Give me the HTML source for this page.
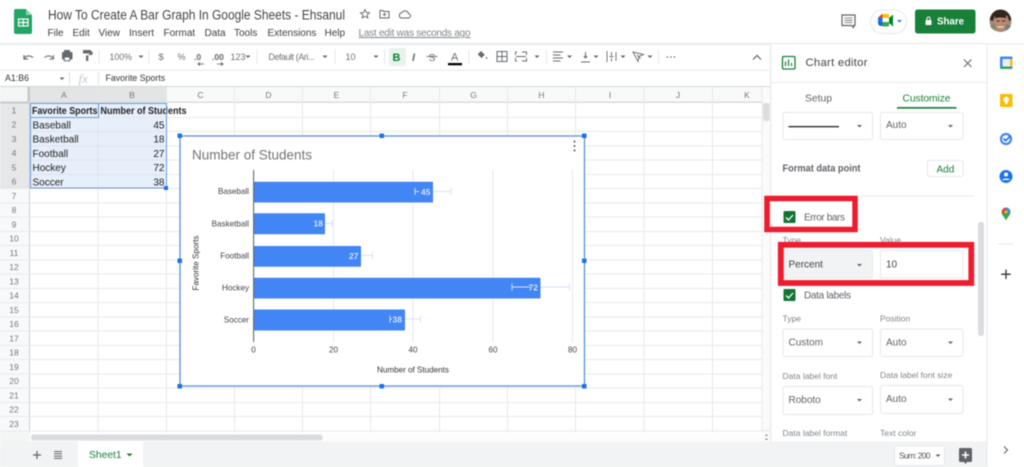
<!DOCTYPE html>
<html><head><meta charset="utf-8"><title>How To Create A Bar Graph In Google Sheets</title>
<style>
html,body{margin:0;padding:0;background:#fff;width:1024px;height:467px;overflow:hidden}
svg{display:block;filter:blur(.45px)}
text{font-family:"Liberation Sans",sans-serif;font-size:10px;fill:#3c4043}
.m{font-size:10px;fill:#3c4043}
.h{font-size:8.5px;fill:#777;text-anchor:middle}
.c{font-size:10px;fill:#222}
.b{font-weight:bold;fill:#222;font-size:10px}
.r{text-anchor:end}
.a{font-size:8.1px;fill:#444;text-anchor:end}
.x{font-size:8.1px;fill:#444;text-anchor:middle}
.l{font-size:8.5px;fill:#d5e2fb;font-weight:bold;text-anchor:end}
.e{font-size:10px;fill:#5f6368}
.s{font-size:8.5px;fill:#80868b}
.gl{stroke:#e8e9e9;stroke-width:1}
.box{fill:#fff;stroke:#e6e7e9;stroke-width:1}
.ar{fill:#5f6368}
.eb{stroke:#d5e2fa;stroke-width:1;fill:none}
.hd{fill:#1a73e8}
.ic{fill:none;stroke:#5f6368;stroke-width:1.2}
</style></head><body>
<svg width="1024" height="467" viewBox="0 0 1024 467" xmlns="http://www.w3.org/2000/svg">
<rect width="1024" height="467" fill="#fff"/>

<!-- logo -->
<path d="M16 9h10l6 6v17a2 2 0 0 1-2 2H16a2 2 0 0 1-2-2V11a2 2 0 0 1 2-2z" fill="#23a566"/>
<path d="M26 9l6 6h-6z" fill="#8ed1b1"/>
<rect x="18.500" y="19" width="9.500" height="7" fill="none" stroke="#fff" stroke-width="1.200"/>
<path d="M23.200 19v7M18.500 22.500H28" stroke="#fff" stroke-width="1.200"/>

<text x="48" y="19.500" style="font-size:13.400px;fill:#444746" textLength="297" lengthAdjust="spacingAndGlyphs">How To Create A Bar Graph In Google Sheets - Ehsanul</text>
<path d="M365 9.500l1.300 3 3.200.3-2.400 2.100.7 3.100-2.800-1.600-2.800 1.600.7-3.100-2.400-2.100 3.200-.3z" fill="none" stroke="#5f6368" stroke-width=".9"/>
<path d="M380 10.500h3l1 1h5v6.500h-9z" fill="none" stroke="#5f6368" stroke-width="1"/>
<path d="M384.500 12.500v4M382.500 14.500h4" stroke="#5f6368" stroke-width=".8"/>
<path d="M401 18h7a2.200 2.200 0 0 0 .5-4.400 3.500 3.500 0 0 0-6.500-.8 2.700 2.700 0 0 0-1 5.200z" fill="none" stroke="#5f6368" stroke-width="1"/>

<text class="m" x="47.500" y="36">File</text>
<text class="m" x="72.500" y="36">Edit</text>
<text class="m" x="98.500" y="36">View</text>
<text class="m" x="129" y="36">Insert</text>
<text class="m" x="163.500" y="36">Format</text>
<text class="m" x="204.500" y="36">Data</text>
<text class="m" x="234" y="36">Tools</text>
<text class="m" x="267.500" y="36">Extensions</text>
<text class="m" x="324.500" y="36">Help</text>
<text x="358.500" y="36" style="font-size:10px;fill:#80868b" textLength="112" text-decoration="underline">Last edit was seconds ago</text>

<!-- top right -->
<path d="M842 15h13v10.500h-1.500v2l-2-2H842z" fill="none" stroke="#5f6368" stroke-width="1.200"/>
<path d="M844.500 18h8M844.500 20.300h8M844.500 22.600h8" stroke="#5f6368" stroke-width=".8"/>
<rect x="870.500" y="10" width="36" height="23.500" rx="11.700" fill="#fff" stroke="#e6e7e9"/>
<path d="M878 17.500l4-3.500h7v4h-6.500v3.500H878z" fill="#ea4335"/>
<path d="M878 17.500h4.500v4.500H878z" fill="#1a73e8"/>
<path d="M878 22h4.500v4H881a3 3 0 0 1-3-3z" fill="#1967d2"/>
<path d="M882.500 22h6.500v4.500h-6.500z" fill="#34a853"/>
<path d="M882.500 14h6.500v4h-6.500z" fill="#fbbc04"/>
<path d="M889 18l4-3.500v12L889 23z" fill="#00832d"/>
<path d="M897 20h5l-2.500 2.500z" fill="#1a73e8"/>
<rect x="915" y="9.500" width="60.500" height="24" rx="2.500" fill="#188038"/>
<rect x="925.500" y="20" width="6" height="5" rx=".8" fill="#fff"/>
<path d="M926.800 20v-1.300a1.700 1.700 0 0 1 3.400 0V20" fill="none" stroke="#fff" stroke-width=".9"/>
<text x="937" y="24.500" style="font-size:10.500px;fill:#fff;font-weight:bold" textLength="27" lengthAdjust="spacingAndGlyphs">Share</text>
<circle cx="1000.500" cy="21" r="11" fill="#a88773"/>
<path d="M990 20a10.500 10.500 0 0 1 21 0l-2 1c-.5-3-1-5-3-5.500-3 1-8 .7-11 .5-1 1-1.500 3-2 5z" fill="#33261f"/>
<ellipse cx="1000.500" cy="23" rx="6" ry="7.500" fill="#b98a70"/>
<path d="M995 18.500c3-1.500 8-1.500 11 0l-.5-4h-10z" fill="#2e221c"/>
<path d="M996.500 21h3M1002 21h3" stroke="#33261f" stroke-width="1"/>
<path d="M997.500 27h6" stroke="#f0e5dc" stroke-width="1.200"/>
<path d="M990 26a11 11 0 0 0 6 5l-1-7z" fill="#7c8a6b"/>
<path d="M1011 26a11 11 0 0 1-6 5l1-7z" fill="#6f7d8a"/>

<!-- bars -->
<rect x="0" y="43" width="987" height="1" fill="#e6e7e8"/>
<rect x="0" y="44" width="771" height="1.500" fill="#f1f3f4"/>
<rect x="0" y="69.500" width="771" height="1.500" fill="#eeeff0"/>
<rect x="0" y="86" width="771" height="1" fill="#d5d6d7"/>
<rect x="987" y="43.500" width="37" height="1" fill="#e6e7e8"/>

<!-- toolbar -->
<path d="M24 59c1.500-3.500 6-4 9-1.500M24 55v4h4" class="ic" style="stroke:#6b6f73"/>
<path d="M53.500 59c-1.500-3.500-6-4-9-1.500M53.500 55v4h-4" class="ic" style="stroke:#7a7d80"/>
<rect x="62" y="52" width="10.500" height="7.500" rx="1" fill="#666a6e"/><rect x="64" y="50" width="6" height="2.500" fill="#666a6e"/><rect x="64.300" y="57" width="5.500" height="3.800" fill="#fff" stroke="#666a6e"/>
<path d="M83 50h8v3.500h-8zM91 51.500h1.500v3.500h-5v1.500" fill="#666a6e"/><rect x="86" y="55.500" width="2.300" height="5.500" fill="#666a6e"/>
<rect x="98.500" y="50" width="1" height="14" fill="#e6e7e9"/>
<text x="109.500" y="60" style="font-size:8.800px;fill:#707070">100%</text>
<path d="M138.500 55.500h5l-2.500 2.500z" class="ar"/>
<rect x="148.500" y="50" width="1" height="14" fill="#e6e7e9"/>
<text x="158.500" y="60" style="font-size:9.500px;fill:#707070">$</text>
<text x="177.500" y="60" style="font-size:9px;fill:#707070">%</text>
<text x="194" y="60" style="font-size:8.500px;fill:#666;font-weight:bold">.0</text>
<path d="M204 64h-6M200 62.500L198 64l2 1.500" stroke="#555" fill="none" stroke-width=".8"/>
<text x="212" y="60" style="font-size:8.500px;fill:#666;font-weight:bold">.00</text>
<path d="M217 64h6M221 62.500l2 1.500-2 1.500" stroke="#555" fill="none" stroke-width=".8"/>
<text x="230.500" y="60" style="font-size:9px;fill:#707070">123</text>
<path d="M245.500 55.500h5l-2.500 2.500z" class="ar"/>
<rect x="256.500" y="50" width="1" height="14" fill="#e6e7e9"/>
<text x="268.500" y="60" style="font-size:8.800px;fill:#707070" textLength="46">Default (Ari...</text>
<path d="M322.500 55.500h5l-2.500 2.500z" class="ar"/>
<rect x="334.500" y="50" width="1" height="14" fill="#e6e7e9"/>
<text x="345.500" y="60" style="font-size:9px;fill:#707070">10</text>
<path d="M373.500 55.500h5l-2.500 2.500z" class="ar"/>
<rect x="384" y="50" width="1" height="14" fill="#e6e7e9"/>
<rect x="389" y="48" width="17" height="18" rx="2" fill="#e6f4ea"/>
<text x="392.500" y="61" style="font-size:11px;font-weight:bold;fill:#188038">B</text>
<text x="412" y="61" style="font-size:11px;font-style:italic;font-weight:bold;fill:#6b6f73">I</text>
<text x="428.500" y="61" style="font-size:10.500px;fill:#6b6f73">S</text><rect x="426.500" y="56" width="11" height=".9" fill="#6b6f73"/>
<text x="451" y="60.500" style="font-size:11px;fill:#6b6f73">A</text><rect x="448" y="63" width="14" height="2.300" fill="#000"/>
<rect x="468.500" y="50" width="1" height="14" fill="#e6e7e9"/>
<path d="M481 51l3.800 3.800-3.300 3.300-3.800-3.800z" fill="#666a6e"/><circle cx="486.500" cy="58" r=".9" fill="#666a6e"/>
<rect x="497" y="51.500" width="10" height="10" fill="none" stroke="#666a6e" stroke-width="1"/><path d="M502 51.500v10M497 56.500h10" stroke="#666a6e" stroke-width=".9"/>
<path d="M517 52h-1.500v3M517 61h-1.500v-3M522 52h4.500v3M522 61h4.500v-3M516 56.500h10" stroke="#666a6e" fill="none" stroke-width="1"/>
<path d="M534.500 55.500h5l-2.500 2.500z" class="ar"/>
<rect x="546" y="50" width="1" height="14" fill="#e6e7e9"/>
<path d="M553 52h10M553 55h7.500M553 58h10M553 61h7.500" stroke="#666a6e" stroke-width=".9"/>
<path d="M567 55.500h5l-2.500 2.500z" class="ar"/>
<path d="M581 62h9M585.500 52v5.500M583.800 56l1.700 2 1.700-2" stroke="#666a6e" fill="none" stroke-width="1"/>
<path d="M593.500 55.500h5l-2.500 2.500z" class="ar"/>
<path d="M607 51v11M616 52v9M611.500 52v3.500M611.500 58v3.500M609.500 56.500h4" stroke="#666a6e" fill="none" stroke-width=".9"/>
<path d="M620.500 55.500h5l-2.500 2.500z" class="ar"/>
<path d="M633 52l10.500 2.500-4.500 2-1 5zM637 55l3.500 3.500" stroke="#666a6e" fill="none" stroke-width=".9"/>
<path d="M647.500 55.500h5l-2.500 2.500z" class="ar"/>
<rect x="658" y="50" width="1" height="14" fill="#e6e7e9"/>
<circle cx="667.500" cy="57" r=".8" fill="#5f6368"/><circle cx="671" cy="57" r=".8" fill="#5f6368"/><circle cx="674.500" cy="57" r=".8" fill="#5f6368"/>
<path d="M753 59.500l4-4 4 4" fill="none" stroke="#5f6368" stroke-width="1.200"/>

<!-- formula -->
<text x="5" y="81" style="font-size:8.800px;fill:#333">A1:B6</text>
<path d="M59.500 77.500h5l-2.500 2.500z" class="ar"/>
<rect x="69" y="72" width="1" height="13" fill="#dfe0e1"/>
<text x="78.500" y="83" style="font-size:13px;font-style:italic;fill:#c5c7c9;font-family:'Liberation Serif',serif">fx</text>
<rect x="98" y="72" width="1" height="13" fill="#dfe0e1"/>
<text x="105.500" y="81" style="font-size:8.800px;fill:#333">Favorite Sports</text>

<!-- sheet -->
<rect x="0" y="87" width="762" height="15.500" fill="#f8f9fa"/>
<rect x="0" y="103" width="29.500" height="329" fill="#f8f9fa"/>
<rect x="30" y="87" width="136.500" height="15.500" fill="#e3e4e6"/>
<rect x="0" y="103" width="29.500" height="85.500" fill="#e6e7e8"/>
<rect x="0" y="87" width="29" height="15.500" fill="#f4f5f5"/>
<rect x="27.500" y="87" width="2.500" height="15.500" fill="#c6c7c9"/>
<rect x="0" y="101.500" width="29" height="2" fill="#c9cacc"/>
<rect x="30" y="101.500" width="732" height="1.500" fill="#dcdddd"/>
<rect x="29" y="103" width="1" height="329" fill="#cfd0d2"/>
<rect x="30" y="103" width="136.500" height="85.500" fill="#e7effb"/>
<g class="gl">
<path d="M98 87v345M166.500 87v345M234.500 87v345M302.500 87v345M370.500 87v345M439.500 87v345M507.500 87v345M575.500 87v345M644 87v345M712.500 87v345M762 87v345"/>
<path d="M0 117.500h762M0 131.500h762M0 146h762M0 160h762M0 174.500h762M0 188.500h762M0 203h762M0 217h762M0 231.500h762M0 245.500h762M0 260h762M0 274h762M0 288.500h762M0 302.500h762M0 317h762M0 331h762M0 345.500h762M0 359.500h762M0 374h762M0 388h762M0 402.500h762M0 416.500h762M0 431h762"/>
</g>
<path d="M30 131.500h136.500M30 146h136.500M30 160h136.500M30 174.500h136.500M98 117.500v71" stroke="#dbe4f0" fill="none"/>

<g class="h">
<text class="h" x="64" y="98">A</text><text class="h" x="132" y="98">B</text><text class="h" x="200.500" y="98">C</text><text class="h" x="268.500" y="98">D</text><text class="h" x="336.500" y="98">E</text><text class="h" x="405" y="98">F</text><text class="h" x="473.500" y="98">G</text><text class="h" x="541.500" y="98">H</text><text class="h" x="610" y="98">I</text><text class="h" x="678" y="98">J</text><text class="h" x="747" y="98">K</text>
<text class="h" x="14" y="113.500">1</text><text class="h" x="14" y="127.500">2</text><text class="h" x="14" y="142">3</text><text class="h" x="14" y="156">4</text><text class="h" x="14" y="170.500">5</text><text class="h" x="14" y="184.500">6</text><text class="h" x="14" y="199">7</text><text class="h" x="14" y="213">8</text><text class="h" x="14" y="227.500">9</text><text class="h" x="14" y="241.500">10</text><text class="h" x="14" y="256">11</text><text class="h" x="14" y="270">12</text><text class="h" x="14" y="284.500">13</text><text class="h" x="14" y="298.500">14</text><text class="h" x="14" y="313">15</text><text class="h" x="14" y="327">16</text><text class="h" x="14" y="341.500">17</text><text class="h" x="14" y="355.500">18</text><text class="h" x="14" y="370">19</text><text class="h" x="14" y="384">20</text><text class="h" x="14" y="398.500">21</text><text class="h" x="14" y="412.500">22</text><text class="h" x="14" y="427">23</text>
</g>

<text class="b" x="32" y="114" textLength="65.500" lengthAdjust="spacingAndGlyphs">Favorite Sports</text>
<text class="b" x="100.500" y="114" textLength="86" lengthAdjust="spacingAndGlyphs">Number of Students</text>
<text class="c" x="32.500" y="128.500">Baseball</text><text class="c r" x="164.500" y="128.500">45</text>
<text class="c" x="32.500" y="142.500">Basketball</text><text class="c r" x="164.500" y="142.500">18</text>
<text class="c" x="32.500" y="157">Football</text><text class="c r" x="164.500" y="157">27</text>
<text class="c" x="32.500" y="171">Hockey</text><text class="c r" x="164.500" y="171">72</text>
<text class="c" x="32.500" y="185.500">Soccer</text><text class="c r" x="164.500" y="185.500">38</text>
<rect x="30.500" y="103.500" width="136" height="84.500" fill="none" stroke="#6b9ad6" stroke-width="1"/>
<rect x="30.500" y="103.500" width="68" height="14" fill="none" stroke="#6b9ad6" stroke-width="1"/>
<rect x="164" y="186" width="4" height="4" fill="#1a73e8"/>

<!-- chart -->
<rect x="180" y="136" width="404.500" height="250" fill="#fff" stroke="#5b8fd4" stroke-width="1.300"/>
<text x="192" y="159.500" style="font-size:14px;fill:#757575" textLength="120" lengthAdjust="spacingAndGlyphs">Number of Students</text>
<circle cx="574.500" cy="141.500" r="1" fill="#555"/><circle cx="574.500" cy="146" r="1" fill="#555"/><circle cx="574.500" cy="150.500" r="1" fill="#555"/>
<path d="M333.500 170v172M413 170v172M493 170v172M572.500 170v172" stroke="#ebebeb" stroke-width="1.200"/>
<rect x="253.500" y="181.700" width="179.500" height="20.800" rx=".8" fill="#4285f4"/>
<rect x="253.500" y="213.300" width="71.500" height="21" rx=".8" fill="#4285f4"/>
<rect x="253.500" y="246" width="107.500" height="20.800" rx=".8" fill="#4285f4"/>
<rect x="253.500" y="277.700" width="287" height="20.800" rx=".8" fill="#4285f4"/>
<rect x="253.500" y="309.500" width="151.500" height="21" rx=".8" fill="#4285f4"/>
<rect x="253" y="170" width="1.200" height="172" fill="#6f7276"/>
<path class="eb" d="M415 188v7M415 191.500h4M433 191.500h18M451 188v7"/>
<path class="eb" d="M325 223.500h7M332 220v7"/>
<path class="eb" d="M361 255.500h11.500M372.500 252v7"/>
<path class="eb" d="M512 283.500v7M512 287h18M540.500 287h29M569.500 283.500v7"/>
<path class="eb" d="M390 315.500v7M390 319h2M405 319h15.500M420.500 315.500v7"/>
<text class="l" x="430.500" y="195">45</text>
<text class="l" x="323" y="226.500">18</text>
<text class="l" x="358.500" y="258.800">27</text>
<text class="l" x="538" y="290.500">72</text>
<text class="l" x="402" y="322.500">38</text>
<text class="a" x="249" y="194">Baseball</text>
<text class="a" x="249" y="226.500">Basketball</text>
<text class="a" x="249" y="258.500">Football</text>
<text class="a" x="249" y="290.500">Hockey</text>
<text class="a" x="249" y="322.500">Soccer</text>
<text class="x" x="253.500" y="352.500">0</text><text class="x" x="333.500" y="352.500">20</text><text class="x" x="413" y="352.500">40</text><text class="x" x="493" y="352.500">60</text><text class="x" x="572.500" y="352.500">80</text>
<text class="x" x="413" y="372.500" style="font-size:8.100px;fill:#333">Number of Students</text>
<text transform="translate(198.500,263) rotate(-90)" style="font-size:8.100px;fill:#333;text-anchor:middle">Favorite Sports</text>
<g class="hd">
<rect x="177.500" y="133.500" width="4.500" height="4.500"/><rect x="379.500" y="133.500" width="4.500" height="4.500"/><rect x="582" y="133.500" width="4.500" height="4.500"/>
<rect x="177.500" y="258.500" width="4.500" height="4.500"/><rect x="582" y="258.500" width="4.500" height="4.500"/>
<rect x="177.500" y="384" width="4.500" height="4.500"/><rect x="379.500" y="384" width="4.500" height="4.500"/><rect x="582" y="384" width="4.500" height="4.500"/>
</g>

<!-- sheet scrollbars -->
<rect x="762.500" y="87" width="8.500" height="354" fill="#fbfbfb"/>
<rect x="763" y="103" width="6.500" height="18" rx="2" fill="#dadce0"/>
<rect x="762" y="430" width="9" height="1" fill="#e3e4e6"/>
<path d="M765 436l1.500-2 1.500 2z" fill="#888"/><path d="M765 438.500h3l-1.500 2z" fill="#888"/>
<rect x="0" y="432" width="30" height="9.500" fill="#f4f5f5"/>
<rect x="30" y="434" width="732" height="7.500" fill="#fdfdfd"/>
<rect x="31" y="434.500" width="291.500" height="6" rx="2.500" fill="#dadce0"/>

<!-- bottom bar -->
<rect x="0" y="441.500" width="987" height="25.500" fill="#f1f3f4"/>
<rect x="78" y="441.500" width="65" height="25.500" fill="#fff"/>
<path d="M37 451v8M33 455h8" stroke="#5f6368" stroke-width="1.200"/>
<path d="M54 451.500h8M54 453.800h8M54 456.100h8M54 458.400h8" stroke="#5f6368" stroke-width="1"/>
<text x="89" y="458" style="font-size:10.300px;fill:#188038">Sheet1</text>
<path d="M126.500 453.500h6l-3 3z" fill="#188038"/>
<rect x="894.500" y="446" width="50" height="19.500" rx="2" fill="#fff" stroke="#e6e7e9"/>
<text x="899" y="458.500" style="font-size:8.500px;fill:#555" textLength="31.500">Sum: 200</text>
<path d="M935.500 454.500h5l-2.500 2.500z" class="ar"/>
<rect x="959" y="448" width="13" height="14" rx="1.500" fill="#5f6368"/>
<path d="M964 462h3l-1.500 2z" fill="#5f6368"/>
<path d="M965.500 451.500v7M962 455h7" stroke="#fff" stroke-width="1.600"/>

<!-- editor panel -->
<rect x="770" y="43.500" width="1.500" height="398" fill="#ececed"/>
<rect x="771.500" y="44" width="215" height="397.500" fill="#fff"/>
<rect x="771.500" y="82" width="215" height="1" fill="#e8eaed"/>
<rect x="986.500" y="43.500" width="1" height="423.500" fill="#e6e7e9"/>
<rect x="782.500" y="56.500" width="12.500" height="12.500" rx="1" fill="none" stroke="#188038" stroke-width="1.300"/>
<path d="M785.500 61.500V66M788.500 59.500V66M791.500 63V66" stroke="#188038" stroke-width="1.200"/>
<text x="805.500" y="66" style="font-size:11.300px;fill:#444" textLength="62">Chart editor</text>
<path d="M964 59.500l7.500 7.500M971.500 59.500L964 67" stroke="#5f6368" stroke-width="1"/>
<text x="805" y="101.500" class="e" style="font-size:10.300px" textLength="27">Setup</text>
<text x="902.500" y="101.500" style="font-size:10.300px;fill:#188038" textLength="48">Customize</text>
<rect x="897" y="107" width="59.500" height="1.700" fill="#188038"/>

<rect class="box" x="783" y="112.500" width="89.500" height="27" rx="2"/>
<rect x="788.500" y="126" width="50.500" height="1.300" fill="#222"/>
<path d="M857 125h5l-2.500 2.500z" class="ar"/>
<rect class="box" x="880.500" y="112.500" width="82.500" height="27" rx="2"/>
<text class="e" x="886" y="128">Auto</text>
<path d="M948 125h5l-2.500 2.500z" class="ar"/>

<text x="782.500" y="171.500" style="font-size:9.800px;font-weight:bold;fill:#5f6368" textLength="78" lengthAdjust="spacingAndGlyphs">Format data point</text>
<rect class="box" x="927.500" y="160.500" width="35.500" height="16" rx="2"/>
<text x="936.500" y="172.500" style="font-size:10px;fill:#188038">Add</text>
<rect x="771.500" y="195.500" width="203" height="1" fill="#e8eaed"/>

<!-- Error bars -->
<rect x="783.500" y="211" width="12" height="12" rx="1.300" fill="#137333"/>
<path d="M786 217.500l2.500 2.500 4.500-5" fill="none" stroke="#fff" stroke-width="1.300"/>
<text class="e" x="804" y="220.500" textLength="41">Error bars</text>
<rect x="767" y="198.500" width="88" height="31" fill="none" stroke="#ed1c2e" stroke-width="5.500"/>
<text class="s" x="782.500" y="243">Type</text>
<text class="s" x="880" y="243">Value</text>
<rect x="783.500" y="250.500" width="89" height="27.500" rx="2" fill="#f1f3f4" stroke="#e8e9ea"/>
<text x="788.500" y="267.500" style="font-size:10px;fill:#444">Percent</text>
<path d="M857 264h5l-2.500 2.500z" class="ar"/>
<rect class="box" x="880.500" y="250.500" width="82.500" height="27.500"/>
<text x="886" y="267.500" style="font-size:10px;fill:#444">10</text>
<rect x="780.800" y="244.800" width="190.500" height="38.200" fill="none" stroke="#ed1c2e" stroke-width="5.800"/>
<rect x="978" y="222" width="6" height="114" rx="2.500" fill="#dadce0"/>

<!-- Data labels -->
<rect x="783.500" y="289" width="12" height="12" rx="1.300" fill="#137333"/>
<path d="M786 295.500l2.500 2.500 4.500-5" fill="none" stroke="#fff" stroke-width="1.300"/>
<text class="e" x="804" y="298.500" textLength="47">Data labels</text>
<text class="s" x="782.500" y="321.500">Type</text>
<text class="s" x="880" y="321.500">Position</text>
<rect class="box" x="783" y="329" width="89.500" height="27.500" rx="2"/>
<text class="e" x="788.500" y="345.500">Custom</text>
<path d="M857 341.500h5l-2.500 2.500z" class="ar"/>
<rect class="box" x="880.500" y="329" width="82.500" height="27.500" rx="2"/>
<text class="e" x="886" y="345.500">Auto</text>
<path d="M948 341.500h5l-2.500 2.500z" class="ar"/>
<text class="s" x="782.500" y="379">Data label font</text>
<text class="s" x="880" y="378">Data label font size</text>
<rect class="box" x="783" y="386.500" width="89.500" height="28" rx="2"/>
<text class="e" x="788.500" y="403">Roboto</text>
<path d="M857 399h5l-2.500 2.500z" class="ar"/>
<rect class="box" x="880.500" y="385.500" width="82.500" height="28" rx="2"/>
<text class="e" x="886" y="402">Auto</text>
<path d="M948 398.500h5l-2.500 2.500z" class="ar"/>
<text class="s" x="782.500" y="436">Data label format</text>
<text class="s" x="880" y="436">Text color</text>

<!-- right sidebar -->
<rect x="1000" y="56.500" width="12.500" height="12.500" rx="1" fill="#4285f4"/>
<rect x="1002.500" y="59" width="7.500" height="7.500" fill="#e8f0fe"/>
<path d="M1000 66.500h10v2.500h-10z" fill="#34a853"/><path d="M1010 59h2.500v7.500H1010z" fill="#fbbc04"/>
<rect x="1000" y="94" width="12.500" height="13" rx="1" fill="#fbbc04"/>
<circle cx="1006.200" cy="99.500" r="2.800" fill="#fff"/><rect x="1005" y="102" width="2.500" height="2" fill="#fff"/>
<circle cx="1006" cy="139" r="5" fill="none" stroke="#4285f4" stroke-width="2.200"/>
<path d="M1003.500 138.500l2.200 2.200 5-5" fill="none" stroke="#1a73e8" stroke-width="1.700"/>
<circle cx="1006" cy="176.500" r="6.500" fill="#1a73e8"/>
<circle cx="1006" cy="174.500" r="2" fill="#fff"/>
<path d="M1002 180c.5-2 7.500-2 8 0z" fill="#fff"/>
<path d="M1006 207.500a4.500 4.500 0 0 0-4.500 4.500c0 3 3 5 4.500 8.500 1.500-3.500 4.500-5.500 4.500-8.500a4.500 4.500 0 0 0-4.500-4.500z" fill="#34a853"/>
<path d="M1002 210.500a4.500 4.500 0 0 1 4-3l1 3-4 3.500z" fill="#ea4335"/>
<path d="M1006 207.500a4.500 4.500 0 0 1 4.500 4.500l-3.500 1-1.500-2z" fill="#4285f4"/>
<circle cx="1006" cy="212" r="1.500" fill="#fbbc04"/>
<rect x="998" y="243.500" width="15" height="1" fill="#e6e7e9"/>
<path d="M1006 269.500v9.500M1001.200 274.200h9.500" stroke="#333" stroke-width="1.300"/>
<path d="M1004 446.500l3.500 3.500-3.500 3.500" fill="none" stroke="#5f6368" stroke-width="1.100"/>
</svg>
</body></html>
